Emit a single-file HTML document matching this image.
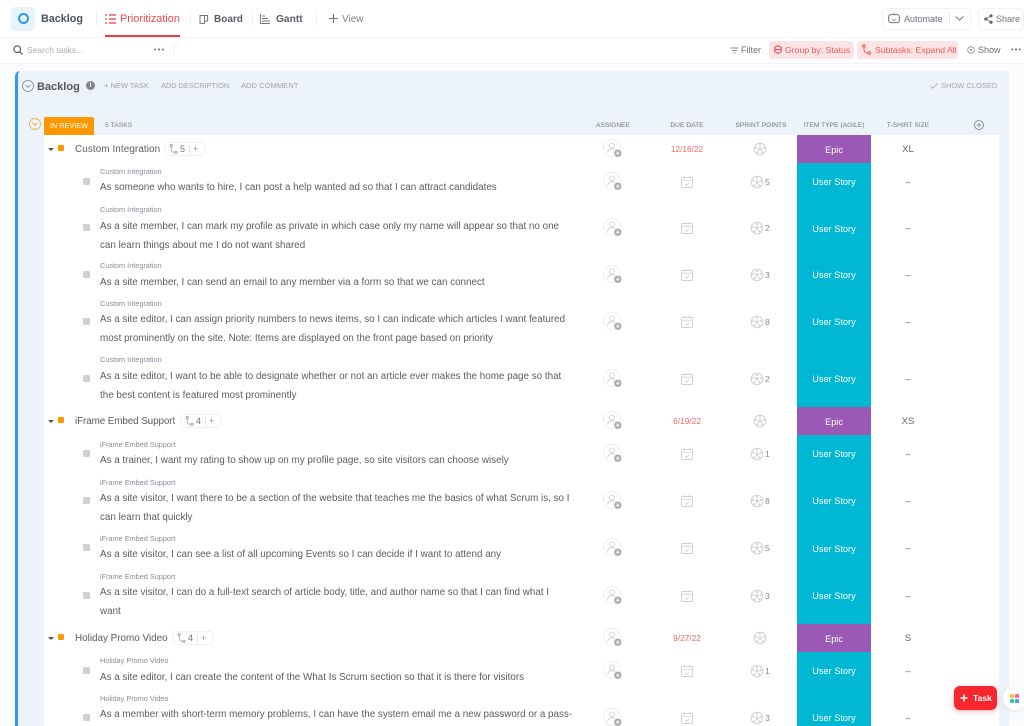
<!DOCTYPE html>
<html><head><meta charset="utf-8"><title>Backlog</title>
<style>
html,body{margin:0;padding:0;width:1024px;height:726px;overflow:hidden;background:#fff}
body{position:relative;font-family:"Liberation Sans","Noto Sans CJK JP",sans-serif;color:#555}
.a,.a *{box-sizing:border-box}
.a{position:absolute;white-space:nowrap}
.t{position:absolute;white-space:nowrap;line-height:14px}
svg{position:absolute;overflow:visible}
.row{position:absolute;left:44px;width:955px;background:#fff;border-bottom:1px solid #f1f2f4}
.row>*{position:absolute}
.sq{left:39px;top:50%;margin-top:-4px;width:7px;height:7px;background:#d0d0d0;border-radius:1px}
.lab{left:56px;font-size:7.3px;color:#868c94;line-height:10px;top:4px;white-space:nowrap}
.txt{left:56px;top:17px;font-size:9.85px;color:#5a5d62;line-height:18.5px;white-space:nowrap}
.r2 .lab{top:6px}.r2 .txt{top:18px}
.av{left:559px;top:50%;margin-top:-10px;width:20px;height:20px}
.cal{left:636px;top:50%;margin-top:-7px;width:14px;height:14px}
.pts{left:706px;top:50%;margin-top:-7px;width:14px;height:14px}
.pn{left:721px;top:50%;margin-top:-7px;line-height:14px;font-size:8.6px;color:#888}
.ty{left:753px;width:74px;top:0;bottom:-1px;padding-top:1px;color:#fff;font-size:9.2px;display:flex;align-items:center;justify-content:center}
.us{background:#00b8d4;border-bottom:1px solid #7fdcea}
.ep{background:#9b59b6}
.sz{left:827px;width:74px;top:50%;margin-top:-6px;line-height:14px;text-align:center;font-size:9.6px;color:#666}
.h .name{left:31px;top:50%;margin-top:-6px;line-height:14px;font-size:9.9px;color:#5a5d62;white-space:nowrap}
.h .ar{left:4px;top:50%;margin-top:-1px;width:0;height:0;border-left:3px solid transparent;border-right:3px solid transparent;border-top:3.5px solid #555}
.h .o{left:14px;top:50%;margin-top:-4px;width:6px;height:6px;background:#ff9800;border-radius:1px}
.h .due{left:605px;width:76px;text-align:center;top:50%;margin-top:-7px;line-height:14px;font-size:8.3px;color:#f0676b}
.h .pts{left:709px}
.h .cnt{top:50%;margin-top:-7px;height:14px;border:1px solid #f0f1f3;border-radius:3px;font-size:9px;color:#777;line-height:13px;box-sizing:border-box}
.hd{position:absolute;top:119px;font-size:6.6px;color:#70757d;line-height:14px;text-align:center;letter-spacing:.05px;white-space:nowrap}
.pink{position:absolute;box-sizing:border-box;top:41px;height:18px;background:#fde4e4;border-radius:4px;color:#f0565b;font-size:8.7px;line-height:18px;white-space:nowrap}
</style></head><body>
<svg width="0" height="0" style="position:absolute"><defs>
<symbol id="av" viewBox="0 0 20 20"><circle cx="9" cy="9" r="8.6" fill="none" stroke="#d8d8d8" stroke-width=".8" stroke-dasharray="1 1"/><circle cx="9" cy="6.5" r="2.6" fill="none" stroke="#cfcfcf" stroke-width=".8"/><path d="M4.5 14c.3-3 2-4.3 4.5-4.3 1.200 0 2.200.3 3 1" fill="none" stroke="#cfcfcf" stroke-width=".8"/><circle cx="14.8" cy="14.2" r="3.700" fill="#adadad"/><path d="M13 14.200h3.600M14.800 12.400v3.600" stroke="#fff" stroke-width=".9"/></symbol>
<symbol id="cal" viewBox="0 0 14 14"><path d="M2.500 2.500h9a1 1 0 0 1 1 1v8a1 1 0 0 1-1 1h-9a1 1 0 0 1-1-1v-8a1 1 0 0 1 1-1zM1.500 5.200h11M4.500 1v2M9.500 1v2M5 9l1.600 1.400L9.200 7.600" fill="none" stroke="#cfd1d4" stroke-width=".9"/></symbol>
<symbol id="pt" viewBox="0 0 14 14"><circle cx="7" cy="7" r="5.800" fill="none" stroke="#c6c8cb" stroke-width=".9"/><circle cx="7" cy="7" r="1.700" fill="#d2d4d6"/><circle cx="7" cy="3.100" r="1.100" fill="#d2d4d6"/><circle cx="10.700" cy="5.900" r="1.100" fill="#d2d4d6"/><circle cx="9.300" cy="10.200" r="1.100" fill="#d2d4d6"/><circle cx="4.700" cy="10.200" r="1.100" fill="#d2d4d6"/><circle cx="3.300" cy="5.900" r="1.100" fill="#d2d4d6"/></symbol>
<symbol id="st" viewBox="0 0 10 12"><circle cx="2.200" cy="2" r="1.400" fill="none" stroke="#888" stroke-width=".8"/><circle cx="8" cy="10" r="1.400" fill="none" stroke="#888" stroke-width=".8"/><path d="M2.200 3.400v2.800c0 2 1.500 3.800 4.400 3.800" fill="none" stroke="#888" stroke-width=".8"/></symbol>
</defs></svg>

<!-- top bar -->
<div class="a" style="left:11px;top:7px;width:24px;height:24px;background:#e9f3fb;border-radius:4px"></div>
<div class="a" style="left:17.500px;top:13px;width:11px;height:11px;border:2px solid #2d9be6;border-radius:50%"></div>
<div class="t" style="left:41px;top:12px;font-size:10.800px;font-weight:bold;color:#4f5359;line-height:15px">Backlog</div>
<div class="a" style="left:96px;top:11px;width:1px;height:15px;background:#eceef0"></div>
<svg style="left:105px;top:14px" width="11" height="10" viewBox="0 0 11 10"><path d="M0 1h2M4 1h7M0 5h2M4 5h7M0 9h2M4 9h7" stroke="#f0383e" stroke-width="1.200"/></svg>
<div class="t" style="left:120px;top:12px;font-size:10.900px;line-height:15px;color:#f0484d">Prioritization</div>
<div class="a" style="left:105px;top:34.500px;width:75px;height:2px;background:#f0383e"></div>
<div class="a" style="left:190px;top:11px;width:1px;height:15px;background:#eceef0"></div>
<svg style="left:199px;top:14px" width="10" height="10" viewBox="0 0 10 10"><path d="M1 1.500h7.600v5.500H5.600v2.400H1zM5.600 1.500V7" fill="none" stroke="#71757b" stroke-width="1"/></svg>
<div class="t" style="left:214px;top:12px;font-size:10px;line-height:15px;font-weight:bold;color:#5a5d62">Board</div>
<div class="a" style="left:252px;top:11px;width:1px;height:15px;background:#eceef0"></div>
<svg style="left:260px;top:14px" width="11" height="10" viewBox="0 0 11 10"><path d="M.5 0v9.500M.5 9.500H10M2 2h3M2 4.500h6M2 7h8" fill="none" stroke="#71757b" stroke-width=".9"/></svg>
<div class="t" style="left:276px;top:12px;font-size:10.200px;line-height:15px;font-weight:bold;color:#5a5d62">Gantt</div>
<div class="a" style="left:316px;top:11px;width:1px;height:15px;background:#eceef0"></div>
<svg style="left:329px;top:14px" width="9" height="9" viewBox="0 0 9 9"><path d="M4.500 0v9M0 4.500h9" stroke="#71757b" stroke-width="1.100"/></svg>
<div class="t" style="left:342px;top:12px;font-size:10px;line-height:15px;color:#7c828a">View</div>

<div class="a" style="left:882px;top:8px;width:89px;height:22px;border:1px solid #f0f1f3;border-radius:5px"></div>
<svg style="left:888px;top:12px" width="12" height="12" viewBox="0 0 12 12"><rect x=".6" y="2.600" width="10.800" height="8" rx="2.500" fill="none" stroke="#71757b"/><path d="M6 .6v2M4 7.600c1 .8 3 .8 4 0" fill="none" stroke="#71757b" stroke-width=".8"/></svg>
<div class="t" style="left:904px;top:12px;font-size:9px;color:#6d7278">Automate</div>
<div class="a" style="left:949px;top:13px;width:1px;height:11px;background:#e6e7e9"></div>
<svg style="left:955px;top:16px" width="9" height="5" viewBox="0 0 9 5"><path d="M.5.500l4 3.600 4-3.600" fill="none" stroke="#71757b" stroke-width=".9"/></svg>
<div class="a" style="left:978px;top:8px;width:46px;height:22px;border:1px solid #f0f1f3;border-radius:5px"></div>
<svg style="left:984px;top:14px" width="9" height="10" viewBox="0 0 9 10"><circle cx="7" cy="1.800" r="1.600" fill="#64686e"/><circle cx="7" cy="8.200" r="1.600" fill="#64686e"/><circle cx="1.800" cy="5" r="1.600" fill="#64686e"/><path d="M7 1.800L1.800 5 7 8.200" fill="none" stroke="#64686e" stroke-width=".8"/></svg>
<div class="t" style="left:996px;top:12px;font-size:9px;color:#6d7278">Share</div>
<div class="a" style="left:0;top:37px;width:1024px;height:1px;background:#f3f4f6"></div>

<!-- toolbar -->
<svg style="left:13px;top:45px" width="10" height="10" viewBox="0 0 10 10"><circle cx="4.200" cy="4.200" r="3.300" fill="none" stroke="#5a5e64" stroke-width="1.200"/><path d="M6.700 6.700L9.400 9.400" stroke="#5a5e64" stroke-width="1.300"/></svg>
<div class="t" style="left:27px;top:43px;font-size:8.500px;color:#a7abb0">Search tasks...</div>
<svg style="left:154px;top:48px" width="10" height="3" viewBox="0 0 10 3"><circle cx="1.200" cy="1.500" r="1" fill="#6a6e74"/><circle cx="5" cy="1.500" r="1" fill="#6a6e74"/><circle cx="8.800" cy="1.500" r="1" fill="#6a6e74"/></svg>
<div class="a" style="left:174px;top:44px;width:1px;height:12px;background:#eceef0"></div>
<svg style="left:730px;top:47px" width="9" height="7" viewBox="0 0 9 7"><path d="M.5 1h8M2 3.500h5M3.500 6h2" stroke="#8a8e94" stroke-width=".9"/></svg>
<div class="t" style="left:741px;top:43px;font-size:9px;color:#6d7278">Filter</div>
<div class="pink" style="left:769px;width:85px;padding-left:16px">Group by: Status</div>
<svg style="left:774px;top:45px" width="8" height="9" viewBox="0 0 8 9"><path d="M4 .6l3.200 1.700v4.400L4 8.400.8 6.700V2.300zM1 4.500h6" fill="none" stroke="#f0484d" stroke-width="1.100"/></svg>
<div class="pink" style="left:857px;width:101px;padding-left:18px">Subtasks: Expand All</div>
<svg style="left:862px;top:44px" width="9" height="11" viewBox="0 0 10 12"><circle cx="2.200" cy="2" r="1.400" fill="none" stroke="#f0484d"/><circle cx="8" cy="10" r="1.400" fill="none" stroke="#f0484d"/><path d="M2.200 3.400v2.800c0 2 1.500 3.800 4.400 3.800" fill="none" stroke="#f0484d"/></svg>
<svg style="left:967px;top:46px" width="8" height="8" viewBox="0 0 8 8"><circle cx="4" cy="4" r="3.300" fill="none" stroke="#8a8e94" stroke-width=".8"/><circle cx="4" cy="4" r="1" fill="#8a8e94"/></svg>
<div class="t" style="left:978px;top:43px;font-size:9px;color:#6d7278">Show</div>
<svg style="left:1011px;top:48px" width="10" height="3" viewBox="0 0 10 3"><circle cx="1.200" cy="1.500" r="1" fill="#6a6e74"/><circle cx="5" cy="1.500" r="1" fill="#6a6e74"/><circle cx="8.800" cy="1.500" r="1" fill="#6a6e74"/></svg>
<div class="a" style="left:0;top:63px;width:1024px;height:1px;background:#f1f2f4"></div>
<div class="a" style="left:0;top:64px;width:1024px;height:662px;background:#fafbfc"></div>

<!-- panel -->
<div class="a" style="left:15px;top:71px;width:994px;height:655px;background:#edf3fa;border-radius:5px 3px 0 0;border-left:3px solid #2f9ae5"></div>
<svg style="left:22px;top:80px" width="12" height="12" viewBox="0 0 12 12"><circle cx="6" cy="6" r="5.500" fill="none" stroke="#7c828a" stroke-width=".8"/><path d="M3.600 5l2.400 2.300L8.400 5" fill="none" stroke="#7c828a" stroke-width=".8"/></svg>
<div class="t" style="left:37px;top:79px;font-size:11px;font-weight:bold;color:#53575d;line-height:16px">Backlog</div>
<div class="a" style="left:86px;top:81px;width:9px;height:9px;border-radius:50%;background:#80858c;color:#fff;font-size:7px;font-weight:bold;line-height:9px;text-align:center">i</div>
<div class="t" style="left:104px;top:79px;font-size:7.500px;color:#9fa4aa">+ NEW TASK</div>
<div class="t" style="left:161px;top:79px;font-size:7.400px;color:#9fa4aa">ADD DESCRIPTION</div>
<div class="t" style="left:241px;top:79px;font-size:7.600px;color:#9fa4aa">ADD COMMENT</div>
<svg style="left:930px;top:83px" width="8" height="6" viewBox="0 0 8 6"><path d="M.5 3l2.300 2.300L7.500.5" fill="none" stroke="#a4a8ae" stroke-width=".8"/></svg>
<div class="t" style="left:941px;top:79px;font-size:7.500px;color:#a4a8ae">SHOW CLOSED</div>

<svg style="left:29px;top:118px" width="12" height="12" viewBox="0 0 12 12"><circle cx="6" cy="6" r="5.500" fill="none" stroke="#f5b04a" stroke-width=".9"/><path d="M3.600 5l2.400 2.300L8.400 5" fill="none" stroke="#f5a024" stroke-width=".9"/></svg>
<div class="a" style="left:44px;top:117px;width:50px;height:18px;background:#ff9800;border-radius:2px 2px 0 0;color:#fff;font-size:7.300px;line-height:18px;text-align:center">IN REVIEW</div>
<div class="t" style="left:105px;top:119px;font-size:6.700px;color:#777c83;letter-spacing:.05px">5 TASKS</div>
<div class="hd" style="left:585px;width:56px">ASSIGNEE</div>
<div class="hd" style="left:659px;width:56px">DUE DATE</div>
<div class="hd" style="left:728px;width:66px">SPRINT POINTS</div>
<div class="hd" style="left:797px;width:74px">ITEM TYPE (AGILE)</div>
<div class="hd" style="left:878px;width:60px">T-SHIRT SIZE</div>
<svg style="left:974px;top:120px" width="10" height="10" viewBox="0 0 10 10"><circle cx="5" cy="5" r="4.500" fill="none" stroke="#7c828a" stroke-width=".8"/><path d="M5 2.800v4.400M2.800 5h4.400" stroke="#7c828a" stroke-width=".8"/></svg>

<!-- rows -->
<div class="row h" style="top:135px;height:28px">
<i class="ar"></i><i class="o"></i><div class="name" style="letter-spacing:.1px">Custom Integration</div>
<div class="cnt" style="left:121px;width:40px"><svg style="left:3px;top:1px" width="9" height="10"><use href="#st"/></svg><span style="position:absolute;left:14px">5</span><span style="position:absolute;left:23px;top:2px;width:1px;height:9px;background:#e3e4e6"></span><span style="position:absolute;left:27px;color:#999">+</span></div>
<svg class="av"><use href="#av"/></svg><div class="due">12/16/22</div><svg class="pts"><use href="#pt"/></svg>
<div class="ty ep">Epic</div><div class="sz">XL</div></div>

<div class="row" style="top:163px;height:37px"><i class="sq"></i><div class="lab">Custom Integration</div><div class="txt" style="top:16px">As someone who wants to hire, I can post a help wanted ad so that I can attract candidates</div>
<svg class="av"><use href="#av"/></svg><svg class="cal"><use href="#cal"/></svg><svg class="pts"><use href="#pt"/></svg><div class="pn">5</div><div class="ty us">User Story</div><div class="sz">–</div></div>

<div class="row r2" style="top:200px;height:56px"><i class="sq"></i><div class="lab" style="top:5px">Custom Integration</div><div class="txt" style="top:18px">As a site member, I can mark my profile as private in which case only my name will appear so that no one<br>can learn things about me I do not want shared</div>
<svg class="av"><use href="#av"/></svg><svg class="cal"><use href="#cal"/></svg><svg class="pts"><use href="#pt"/></svg><div class="pn">2</div><div class="ty us">User Story</div><div class="sz">–</div></div>

<div class="row" style="top:256px;height:37px"><i class="sq"></i><div class="lab" style="top:5px">Custom Integration</div><div class="txt" style="top:18px">As a site member, I can send an email to any member via a form so that we can connect</div>
<svg class="av"><use href="#av"/></svg><svg class="cal"><use href="#cal"/></svg><svg class="pts"><use href="#pt"/></svg><div class="pn">3</div><div class="ty us">User Story</div><div class="sz">–</div></div>

<div class="row r2" style="top:293px;height:57px"><i class="sq"></i><div class="lab">Custom Integration</div><div class="txt" style="top:18px">As a site editor, I can assign priority numbers to news items, so I can indicate which articles I want featured<br>most prominently on the site. Note: Items are displayed on the front page based on priority</div>
<svg class="av"><use href="#av"/></svg><svg class="cal"><use href="#cal"/></svg><svg class="pts"><use href="#pt"/></svg><div class="pn">8</div><div class="ty us">User Story</div><div class="sz">–</div></div>

<div class="row r2" style="top:350px;height:57px"><i class="sq"></i><div class="lab" style="top:5px">Custom Integration</div><div class="txt" style="top:18px">As a site editor, I want to be able to designate whether or not an article ever makes the home page so that<br>the best content is featured most prominently</div>
<svg class="av"><use href="#av"/></svg><svg class="cal"><use href="#cal"/></svg><svg class="pts"><use href="#pt"/></svg><div class="pn">2</div><div class="ty us">User Story</div><div class="sz">–</div></div>

<div class="row h" style="top:407px;height:28px">
<i class="ar"></i><i class="o"></i><div class="name" style="letter-spacing:-.1px">iFrame Embed Support</div>
<div class="cnt" style="left:137px;width:40px"><svg style="left:3px;top:1px" width="9" height="10"><use href="#st"/></svg><span style="position:absolute;left:14px">4</span><span style="position:absolute;left:23px;top:2px;width:1px;height:9px;background:#e3e4e6"></span><span style="position:absolute;left:27px;color:#999">+</span></div>
<svg class="av"><use href="#av"/></svg><div class="due">6/19/22</div><svg class="pts"><use href="#pt"/></svg>
<div class="ty ep">Epic</div><div class="sz">XS</div></div>

<div class="row" style="top:435px;height:37px"><i class="sq"></i><div class="lab" style="top:5px">iFrame Embed Support</div><div class="txt">As a trainer, I want my rating to show up on my profile page, so site visitors can choose wisely</div>
<svg class="av"><use href="#av"/></svg><svg class="cal"><use href="#cal"/></svg><svg class="pts"><use href="#pt"/></svg><div class="pn">1</div><div class="ty us">User Story</div><div class="sz">–</div></div>

<div class="row r2" style="top:472px;height:57px"><i class="sq"></i><div class="lab">iFrame Embed Support</div><div class="txt" style="top:18px">As a site visitor, I want there to be a section of the website that teaches me the basics of what Scrum is, so I<br>can learn that quickly</div>
<svg class="av"><use href="#av"/></svg><svg class="cal"><use href="#cal"/></svg><svg class="pts"><use href="#pt"/></svg><div class="pn">8</div><div class="ty us">User Story</div><div class="sz">–</div></div>

<div class="row" style="top:529px;height:38px"><i class="sq"></i><div class="lab" style="top:5px">iFrame Embed Support</div><div class="txt">As a site visitor, I can see a list of all upcoming Events so I can decide if I want to attend any</div>
<svg class="av"><use href="#av"/></svg><svg class="cal"><use href="#cal"/></svg><svg class="pts"><use href="#pt"/></svg><div class="pn">5</div><div class="ty us">User Story</div><div class="sz">–</div></div>

<div class="row r2" style="top:567px;height:57px"><i class="sq"></i><div class="lab" style="top:5px">iFrame Embed Support</div><div class="txt" style="top:17px">As a site visitor, I can do a full-text search of article body, title, and author name so that I can find what I<br>want</div>
<svg class="av"><use href="#av"/></svg><svg class="cal"><use href="#cal"/></svg><svg class="pts"><use href="#pt"/></svg><div class="pn">3</div><div class="ty us">User Story</div><div class="sz">–</div></div>

<div class="row h" style="top:624px;height:28px">
<i class="ar"></i><i class="o"></i><div class="name">Holiday Promo Video</div>
<div class="cnt" style="left:129px;width:40px"><svg style="left:3px;top:1px" width="9" height="10"><use href="#st"/></svg><span style="position:absolute;left:14px">4</span><span style="position:absolute;left:23px;top:2px;width:1px;height:9px;background:#e3e4e6"></span><span style="position:absolute;left:27px;color:#999">+</span></div>
<svg class="av"><use href="#av"/></svg><div class="due">9/27/22</div><svg class="pts"><use href="#pt"/></svg>
<div class="ty ep">Epic</div><div class="sz">S</div></div>

<div class="row" style="top:652px;height:37px"><i class="sq"></i><div class="lab">Holiday Promo Video</div><div class="txt">As a site editor, I can create the content of the What Is Scrum section so that it is there for visitors</div>
<svg class="av"><use href="#av"/></svg><svg class="cal"><use href="#cal"/></svg><svg class="pts"><use href="#pt"/></svg><div class="pn">1</div><div class="ty us">User Story</div><div class="sz">–</div></div>

<div class="row r2" style="top:689px;height:57px"><i class="sq"></i><div class="lab" style="top:5px">Holiday Promo Video</div><div class="txt" style="top:17px">As a member with short-term memory problems, I can have the system email me a new password or a pass-<br>word</div>
<svg class="av"><use href="#av"/></svg><svg class="cal"><use href="#cal"/></svg><svg class="pts"><use href="#pt"/></svg><div class="pn">3</div><div class="ty us">User Story</div><div class="sz">–</div></div>

<!-- floating -->
<div class="a" style="left:954px;top:686px;width:43px;height:24px;background:#f8262d;border-radius:6px;box-shadow:0 2px 6px rgba(240,40,45,.3);color:#fff;font-size:8.500px;font-weight:bold;line-height:24px;padding-left:19px">Task</div>
<svg style="left:960px;top:694px" width="8" height="8" viewBox="0 0 8 8"><path d="M4 .5v7M.5 4h7" stroke="#fff" stroke-width="1.500"/></svg>
<div class="a" style="left:1003px;top:686px;width:24px;height:24px;background:#fff;border-radius:50%;box-shadow:0 1px 4px rgba(0,0,0,.08)"></div>
<i class="a" style="left:1010px;top:694px;width:4px;height:4px;border-radius:1px;background:#f7c13c"></i>
<i class="a" style="left:1015px;top:694px;width:4px;height:4px;border-radius:1px;background:#f26aa0"></i>
<i class="a" style="left:1010px;top:699px;width:4px;height:4px;border-radius:1px;background:#3cc9a8"></i>
<i class="a" style="left:1015px;top:699px;width:4px;height:4px;border-radius:1px;background:#4a9ff0"></i>
</body></html>
